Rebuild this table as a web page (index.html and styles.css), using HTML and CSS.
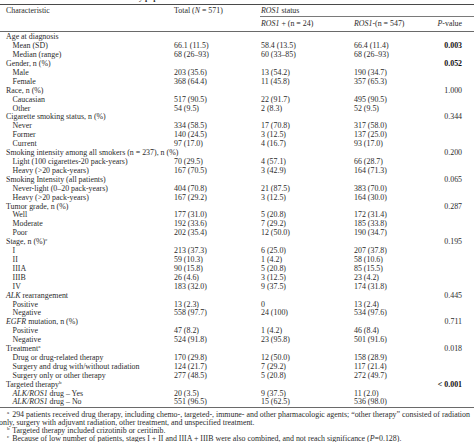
FILE: index.html
```html
<!DOCTYPE html>
<html>
<head>
<meta charset="utf-8">
<link rel="stylesheet" href="styles.css">
</head>
<body>
<div class="cap"><span>Table 1 Patient characteristics of the study population</span></div>
<table class="tbl">
<colgroup><col class="c1"><col class="c2"><col class="c3"><col class="c4"><col class="c5"></colgroup>
<thead>
<tr class="h1">
<th>Characteristic</th>
<th>Total (<i>N</i> = 571)</th>
<th colspan="3" class="grp"><div><i>ROS1</i> status</div></th>
</tr>
<tr class="h2">
<th></th>
<th></th>
<th><i>ROS1</i> + (n = 24)</th>
<th><i>ROS1</i>-(n = 547)</th>
<th class="pv"><i>P</i>-value</th>
</tr>
</thead>
<tbody>
<tr class="first"><td>Age at diagnosis</td><td></td><td></td><td></td><td></td></tr>
<tr><td class="s">Mean (SD)</td><td>66.1 (11.5)</td><td>58.4 (13.5)</td><td>66.4 (11.4)</td><td class="pv b">0.003</td></tr>
<tr><td class="s">Median (range)</td><td>68 (26–93)</td><td>60 (33–85)</td><td>68 (26–93)</td><td></td></tr>
<tr><td>Gender, n (%)</td><td></td><td></td><td></td><td class="pv b">0.052</td></tr>
<tr><td class="s">Male</td><td>203 (35.6)</td><td>13 (54.2)</td><td>190 (34.7)</td><td></td></tr>
<tr><td class="s">Female</td><td>368 (64.4)</td><td>11 (45.8)</td><td>357 (65.3)</td><td></td></tr>
<tr><td>Race, n (%)</td><td></td><td></td><td></td><td class="pv">1.000</td></tr>
<tr><td class="s">Caucasian</td><td>517 (90.5)</td><td>22 (91.7)</td><td>495 (90.5)</td><td></td></tr>
<tr><td class="s">Other</td><td>54 (9.5)</td><td>2 (8.3)</td><td>52 (9.5)</td><td></td></tr>
<tr><td>Cigarette smoking status, n (%)</td><td></td><td></td><td></td><td class="pv">0.344</td></tr>
<tr><td class="s">Never</td><td>334 (58.5)</td><td>17 (70.8)</td><td>317 (58.0)</td><td></td></tr>
<tr><td class="s">Former</td><td>140 (24.5)</td><td>3 (12.5)</td><td>137 (25.0)</td><td></td></tr>
<tr><td class="s">Current</td><td>97 (17.0)</td><td>4 (16.7)</td><td>93 (17.0)</td><td></td></tr>
<tr><td>Smoking intensity among all smokers (n = 237), n (%)</td><td></td><td></td><td></td><td class="pv">0.200</td></tr>
<tr><td class="s">Light (100 cigarettes-20 pack-years)</td><td>70 (29.5)</td><td>4 (57.1)</td><td>66 (28.7)</td><td></td></tr>
<tr><td class="s">Heavy (&gt;20 pack-years)</td><td>167 (70.5)</td><td>3 (42.9)</td><td>164 (71.3)</td><td></td></tr>
<tr><td>Smoking Intensity (all patients)</td><td></td><td></td><td></td><td class="pv">0.065</td></tr>
<tr><td class="s">Never-light (0–20 pack-years)</td><td>404 (70.8)</td><td>21 (87.5)</td><td>383 (70.0)</td><td></td></tr>
<tr><td class="s">Heavy (&gt;20 pack-years)</td><td>167 (29.2)</td><td>3 (12.5)</td><td>164 (30.0)</td><td></td></tr>
<tr><td>Tumor grade, n (%)</td><td></td><td></td><td></td><td class="pv">0.287</td></tr>
<tr><td class="s">Well</td><td>177 (31.0)</td><td>5 (20.8)</td><td>172 (31.4)</td><td></td></tr>
<tr><td class="s">Moderate</td><td>192 (33.6)</td><td>7 (29.2)</td><td>185 (33.8)</td><td></td></tr>
<tr><td class="s">Poor</td><td>202 (35.4)</td><td>12 (50.0)</td><td>190 (34.7)</td><td></td></tr>
<tr><td>Stage, n (%)<sup>c</sup></td><td></td><td></td><td></td><td class="pv">0.195</td></tr>
<tr><td class="s">I</td><td>213 (37.3)</td><td>6 (25.0)</td><td>207 (37.8)</td><td></td></tr>
<tr><td class="s">II</td><td>59 (10.3)</td><td>1 (4.2)</td><td>58 (10.6)</td><td></td></tr>
<tr><td class="s">IIIA</td><td>90 (15.8)</td><td>5 (20.8)</td><td>85 (15.5)</td><td></td></tr>
<tr><td class="s">IIIB</td><td>26 (4.6)</td><td>3 (12.5)</td><td>23 (4.2)</td><td></td></tr>
<tr><td class="s">IV</td><td>183 (32.0)</td><td>9 (37.5)</td><td>174 (31.8)</td><td></td></tr>
<tr><td><i>ALK</i> rearrangement</td><td></td><td></td><td></td><td class="pv">0.445</td></tr>
<tr><td class="s">Positive</td><td>13 (2.3)</td><td>0</td><td>13 (2.4)</td><td></td></tr>
<tr><td class="s">Negative</td><td>558 (97.7)</td><td>24 (100)</td><td>534 (97.6)</td><td></td></tr>
<tr><td><i>EGFR</i> mutation, n (%)</td><td></td><td></td><td></td><td class="pv">0.711</td></tr>
<tr><td class="s">Positive</td><td>47 (8.2)</td><td>1 (4.2)</td><td>46 (8.4)</td><td></td></tr>
<tr><td class="s">Negative</td><td>524 (91.8)</td><td>23 (95.8)</td><td>501 (91.6)</td><td></td></tr>
<tr><td>Treatment<sup>a</sup></td><td></td><td></td><td></td><td class="pv">0.018</td></tr>
<tr><td class="s">Drug or drug-related therapy</td><td>170 (29.8)</td><td>12 (50.0)</td><td>158 (28.9)</td><td></td></tr>
<tr><td class="s">Surgery and drug with/without radiation</td><td>124 (21.7)</td><td>7 (29.2)</td><td>117 (21.4)</td><td></td></tr>
<tr><td class="s">Surgery only or other therapy</td><td>277 (48.5)</td><td>5 (20.8)</td><td>272 (49.7)</td><td></td></tr>
<tr><td>Targeted therapy<sup>b</sup></td><td></td><td></td><td></td><td class="pv b">&lt; 0.001</td></tr>
<tr><td class="s"><i>ALK/ROS1</i> drug – Yes</td><td>20 (3.5)</td><td>9 (37.5)</td><td>11 (2.0)</td><td></td></tr>
<tr class="last"><td class="s"><i>ALK/ROS1</i> drug – No</td><td>551 (96.5)</td><td>15 (62.5)</td><td>536 (98.0)</td><td></td></tr>
</tbody>
</table>
<div class="notes">
<p class="note"><sup>a</sup> 294 patients received drug therapy, including chemo-, targeted-, immune- and other pharmacologic agents; “other therapy” consisted of radiation<br><span class="cont">only, surgery with adjuvant radiation, other treatment, and unspecified treatment.</span></p>
<p class="note"><sup>b</sup> Targeted therapy included crizotinib or ceritinib.</p>
<p class="note"><sup>c</sup> Because of low number of patients, stages I + II and IIIA + IIIB were also combined, and not reach significance (<i>P</i>=0.128).</p>
</div>
</body>
</html>
```

FILE: styles.css
```css
html, body {
  margin: 0;
  padding: 0;
  background: #ffffff;
}
body {
  width: 474px;
  height: 442px;
  overflow: hidden;
  color: #2b2b2b;
  font-family: "Liberation Serif", "Times New Roman", serif;
  font-size: 7.9px;
}
.cap {
  height: 3px;
  overflow: hidden;
}
.cap span {
  display: block;
  line-height: 8px;
  margin-top: -6.5px;
  font-weight: bold;
  font-size: 7.9px;
  white-space: nowrap;
}
.tbl {
  width: 474px;
  margin-top: 1px;
  border-collapse: collapse;
  table-layout: fixed;
  border-top: 1px solid #4a4a4a;
  border-bottom: 1px solid #6a6a6a;
}
.c1 { width: 168px; }
.c2 { width: 87px; }
.c3 { width: 93px; }
.c4 { width: 84px; }
.c5 { width: 42px; }
.tbl th, .tbl td {
  padding: 0 0 0 6px;
  line-height: 8.9px;
  font-weight: normal;
  text-align: left;
  white-space: nowrap;
  vertical-align: top;
}
.tbl .h1 th {
  padding-top: 2px;
}
.tbl .grp {
  padding-left: 5px;
  padding-right: 0;
}
.tbl .grp div {
  padding-left: 1px;
  padding-bottom: 0.5px;
  border-bottom: 1px solid #7a7a7a;
}
.tbl .h1 th:not(.grp) {
  padding-bottom: 1.5px;
}
.tbl .h2 th {
  padding-top: 3px;
  padding-bottom: 2px;
}
.tbl .h2 {
  border-bottom: 1px solid #6a6a6a;
}
.tbl .first td {
  padding-top: 1px;
}
.tbl .s {
  padding-left: 12.5px;
}
.tbl .pv {
  text-align: right;
  padding-right: 12px;
  padding-left: 0;
}
.tbl .b {
  font-weight: bold;
  color: #111111;
}
sup {
  font-size: 5px;
  line-height: 0;
  vertical-align: 3px;
}
.notes {
  margin-top: 2.5px;
}
.note {
  margin: 0;
  line-height: 8px;
  white-space: nowrap;
  padding-left: 7px;
}
.note sup {
  margin-right: 1px;
}
.note .cont {
  display: inline-block;
  margin-left: -8px;
}
```
